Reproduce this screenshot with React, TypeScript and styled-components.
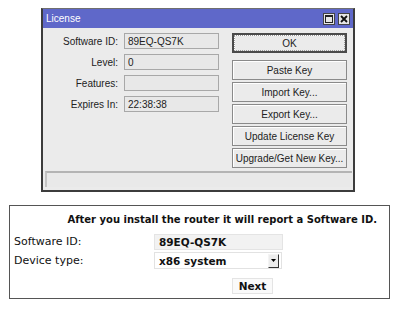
import styled, { createGlobalStyle } from "styled-components";

const Global = createGlobalStyle`
  html, body {
    margin: 0;
    padding: 0;
    background: #ffffff;
  }
  body {
    width: 400px;
    height: 309px;
    overflow: hidden;
  }
`;

const Page = styled.div`
  display: flex;
  flex-direction: column;
  padding-top: 8px;
`;

const Win = styled.div`
  margin-left: 41px;
  width: 314px;
  height: 184px;
  box-sizing: border-box;
  border: 2px solid #3c3c3c;
  border-top: 1px solid #6f6f6f;
  background: #ebebeb;
  display: flex;
  flex-direction: column;
  font-family: "Liberation Sans", Arial, sans-serif;
  font-size: 10px;
  color: #222;
`;

const TitleBar = styled.div`
  height: 19px;
  background: #5f68c9;
  display: flex;
  align-items: center;
  justify-content: space-between;
  padding: 0 3px 0 3px;
  color: #fff;
  font-size: 10px;
`;

const TitleBtns = styled.div`
  display: flex;
  gap: 3px;
`;

const TitleBtn = styled.div`
  width: 10px;
  height: 10px;
  background: #e6e6e6;
  border: 1px solid #444;
  display: flex;
  align-items: center;
  justify-content: center;
`;

const Body = styled.div`
  flex: 1;
  display: flex;
  padding: 5px 6px 0 0;
`;

const Fields = styled.div`
  width: 190px;
  display: flex;
  flex-direction: column;
  gap: 5px;
`;

const FieldRow = styled.div`
  display: flex;
  align-items: center;
  gap: 6px;
`;

const Label = styled.div`
  width: 75px;
  text-align: right;
`;

const Field = styled.div`
  width: 95px;
  height: 16px;
  box-sizing: border-box;
  border: 1px solid #a8a8a8;
  background: #e8e8e8;
  padding: 1px 3px;
  line-height: 13px;
`;

const Buttons = styled.div`
  margin-left: auto;
  display: flex;
  flex-direction: column;
  gap: 2px;
`;

const Btn = styled.div<{ $def?: boolean }>`
  width: 115px;
  height: 20px;
  box-sizing: border-box;
  border: ${(p) => (p.$def ? "2px solid #4a4a4a" : "1px solid #8a8a8a")};
  outline: ${(p) => (p.$def ? "1px dotted #9a9a9a" : "none")};
  outline-offset: -3px;
  background: #ebebeb;
  box-shadow: inset 1px 1px 0 #ffffff;
  display: flex;
  align-items: center;
  justify-content: center;
  margin-bottom: ${(p) => (p.$def ? "5px" : "0")};
`;

const Status = styled.div`
  margin: 0 1px 3px 2px;
  height: 16px;
  box-sizing: border-box;
  border-top: 2px solid #b4b4b4;
  border-left: 2px solid #c4c4c4;
  background: #e9e9e9;
`;

const Form = styled.div`
  margin: 13px 0 0 9px;
  width: 381px;
  height: 94px;
  box-sizing: border-box;
  border: 1px solid #555;
  padding: 8px 12px 0 4px;
  font-family: "DejaVu Sans", Verdana, sans-serif;
  font-size: 11px;
  color: #111;
  display: flex;
  flex-direction: column;
`;

const Heading = styled.div`
  font-weight: bold;
  font-size: 10px;
  text-align: right;
  margin-bottom: 8px;
`;

const FormRow = styled.div`
  display: flex;
  align-items: center;
  height: 17px;
  margin-bottom: 2px;
`;

const FormLabel = styled.div`
  width: 140px;
`;

const IdBox = styled.div`
  width: 129px;
  height: 16px;
  box-sizing: border-box;
  background: #f2f2f2;
  border: 1px solid #e4e4e4;
  font-weight: bold;
  font-size: 10.5px;
  padding: 0 4px;
  line-height: 14px;
`;

const Select = styled.div`
  width: 128px;
  height: 17px;
  box-sizing: border-box;
  border: 1px solid #e2e2e2;
  background: #fff;
  font-weight: bold;
  font-size: 10.5px;
  display: flex;
  align-items: center;
  justify-content: space-between;
  padding-left: 4px;
`;

const Arrow = styled.div`
  width: 11px;
  height: 14px;
  box-sizing: border-box;
  border-right: 1px solid #333;
  border-bottom: 1px solid #333;
  border-top: 1px solid #f4f4f4;
  border-left: 1px solid #f4f4f4;
  background: #ececec;
  display: flex;
  align-items: center;
  justify-content: center;
  margin-right: 2px;
`;

const NextRow = styled.div`
  display: flex;
  padding-left: 218px;
  margin-top: 7px;
`;

const Next = styled.div`
  width: 41px;
  height: 16px;
  box-sizing: border-box;
  border: 1px solid #e4e4e4;
  background: #fafafa;
  font-weight: bold;
  font-size: 10.5px;
  display: flex;
  align-items: center;
  justify-content: center;
`;

export default function App() {
  return (
    <Page>
      <Global />
      <Win>
        <TitleBar>
          <span>License</span>
          <TitleBtns>
            <TitleBtn>
              <svg width="8" height="8" viewBox="0 0 8 8">
                <rect x="0.5" y="0.5" width="7" height="7" fill="none" stroke="#222" />
                <rect x="0.5" y="0.5" width="7" height="1.5" fill="#222" />
              </svg>
            </TitleBtn>
            <TitleBtn>
              <svg width="8" height="8" viewBox="0 0 8 8">
                <path d="M1 1L7 7M7 1L1 7" stroke="#111" strokeWidth="1.8" />
              </svg>
            </TitleBtn>
          </TitleBtns>
        </TitleBar>
        <Body>
          <Fields>
            <FieldRow>
              <Label>Software ID:</Label>
              <Field>89EQ-QS7K</Field>
            </FieldRow>
            <FieldRow>
              <Label>Level:</Label>
              <Field>0</Field>
            </FieldRow>
            <FieldRow>
              <Label>Features:</Label>
              <Field />
            </FieldRow>
            <FieldRow>
              <Label>Expires In:</Label>
              <Field>22:38:38</Field>
            </FieldRow>
          </Fields>
          <Buttons>
            <Btn $def>OK</Btn>
            <Btn>Paste Key</Btn>
            <Btn>Import Key...</Btn>
            <Btn>Export Key...</Btn>
            <Btn>Update License Key</Btn>
            <Btn>Upgrade/Get New Key...</Btn>
          </Buttons>
        </Body>
        <Status />
      </Win>
      <Form>
        <Heading>After you install the router it will report a Software ID.</Heading>
        <FormRow>
          <FormLabel>Software ID:</FormLabel>
          <IdBox>89EQ-QS7K</IdBox>
        </FormRow>
        <FormRow>
          <FormLabel>Device type:</FormLabel>
          <Select>
            x86 system
            <Arrow>
              <svg width="5" height="3" viewBox="0 0 5 3">
                <path d="M0 0H5L2.5 3Z" fill="#000" />
              </svg>
            </Arrow>
          </Select>
        </FormRow>
        <NextRow>
          <Next>Next</Next>
        </NextRow>
      </Form>
    </Page>
  );
}
